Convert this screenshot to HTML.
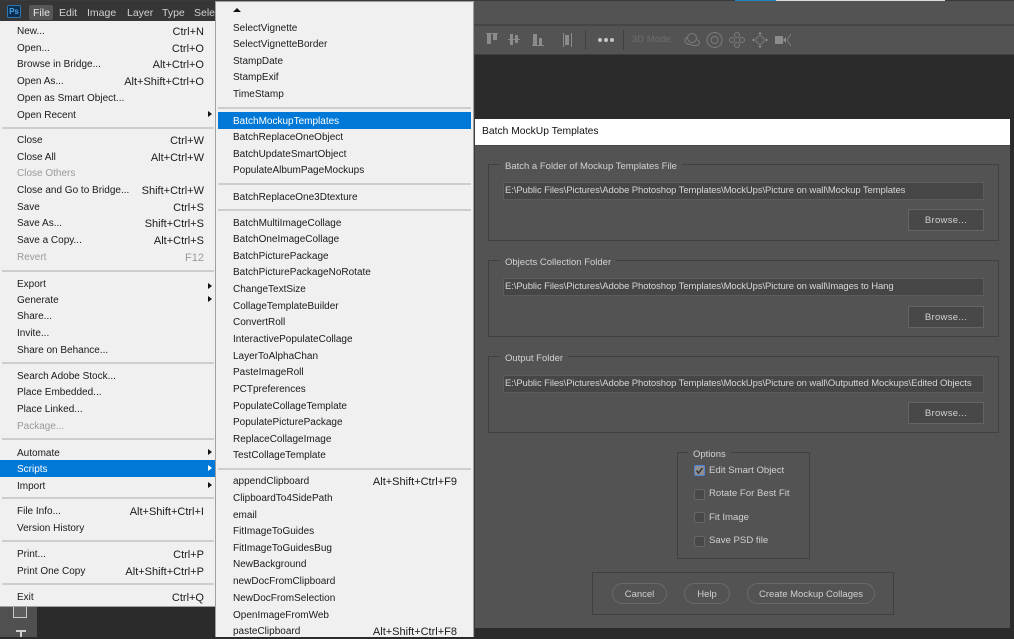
<!DOCTYPE html>
<html><head><meta charset="utf-8">
<style>
*{box-sizing:border-box}
html,body{margin:0;padding:0}
body{width:1014px;height:637px;position:relative;overflow:hidden;background:#2b2b2b;font-family:"Liberation Sans",sans-serif;font-size:10px}
.a{position:absolute}
.t{position:absolute;white-space:nowrap;line-height:14px;height:14px}
.m,.d,.w{margin-top:1px}
.w{color:#fff}
.m{color:#1a1a1a}
.d{color:#9a9a9a}
.sep{position:absolute;height:2px;background:#cdcdcd}
.r{text-align:right;font-size:11px}
.g{position:absolute;border:1px solid #404040}
.lg{position:absolute;background:#535353;color:#d2d2d2;padding:0 5px;line-height:12px;white-space:nowrap;font-size:9.500px;margin-top:1px}
.in{position:absolute;background:#464646;border:1px solid #5c5c5c;color:#d6d6d6;line-height:16px;padding-left:1px;white-space:nowrap;overflow:hidden;left:503px;width:481px;height:18px;font-size:9.500px;letter-spacing:-.1px}
.br{position:absolute;left:908px;width:76px;height:22px;background:#484848;border:1px solid #646464;color:#cfcfcf;text-align:center;line-height:21px;font-size:9.500px;letter-spacing:.3px}
.pb{position:absolute;top:583px;height:21px;border:1px solid #6a6a6a;border-radius:11px;color:#d0d0d0;text-align:center;line-height:22px;background:#535353;font-size:9.500px}
.cb{position:absolute;left:694px;width:11px;height:11px;background:#484848;border:1px solid #666;border-radius:2px}
.cl{position:absolute;left:709px;color:#d0d0d0;line-height:12px;white-space:nowrap;font-size:9.600px}
</style></head><body>
<!-- app bg -->
<div class="a" style="left:0;top:0;width:1014px;height:25px;background:#535353"></div>
<div class="a" style="left:0;top:0;width:216px;height:21px;background:#363636"></div>
<div class="a" style="left:0;top:0;width:1014px;height:1px;background:#3a3a3a"></div>
<div class="a" style="left:735px;top:0;width:41px;height:1px;background:#1f86c4"></div>
<div class="a" style="left:776px;top:0;width:169px;height:1px;background:#dcdcdc"></div>
<div class="a" style="left:0;top:24px;width:1014px;height:2px;background:#464646"></div>
<div class="a" style="left:0;top:26px;width:1014px;height:28px;background:#535353"></div>
<div class="a" style="left:0;top:54px;width:1014px;height:1px;background:#3e3e3e"></div>
<!-- toolbar icons -->
<svg class="a" style="left:470px;top:26px" width="340" height="29" viewBox="0 0 340 29">
<g fill="#8b8b8b">
<rect x="16" y="7" width="12" height="1"/><rect x="17" y="8" width="4" height="10"/><rect x="23" y="8" width="4" height="6"/>
<rect x="38" y="13" width="12" height="1"/><rect x="40" y="8" width="3" height="11"/><rect x="45" y="9" width="3" height="8"/>
<rect x="62" y="19" width="12" height="1"/><rect x="63" y="8" width="4" height="11"/><rect x="69" y="12" width="3" height="7"/>
<rect x="93" y="7" width="1" height="14"/><rect x="101" y="7" width="1" height="14"/><rect x="95" y="9" width="4" height="10"/>
<rect x="115" y="4" width="1" height="20" fill="#3f3f3f"/><rect x="153" y="4" width="1" height="20" fill="#3f3f3f"/>
<circle cx="130" cy="14" r="2" fill="#c4c4c4"/><circle cx="136" cy="14" r="2" fill="#c4c4c4"/><circle cx="142" cy="14" r="2" fill="#c4c4c4"/>
</g>
<g fill="none" stroke="#7c7c7c">
<circle cx="222" cy="12" r="4.500"/>
<path d="M218 11c-3 1-4 3-2 6 2 2 5 1 6 2 2 1 6 1 7-1 1-2 0-4-2-4"/>
<circle cx="244.500" cy="14" r="7.500"/><circle cx="244.500" cy="14" r="3.500"/>
<circle cx="267" cy="9" r="2.500"/><circle cx="267" cy="19" r="2.500"/><circle cx="262" cy="14" r="2.500"/><circle cx="272" cy="14" r="2.500"/>
<path d="M290 9l5 5-5 5-5-5z"/>
<path d="M321 8l-4 6 4 6"/>
</g>
<g fill="#8c8c8c">
<path d="M290 6l2 2h-4zM290 22l2-2h-4zM282 14l2-2v4zM298 14l-2-2v4z"/>
<rect x="305" y="10" width="8" height="8"/><path d="M313 14l3-3v6z"/>
</g>
</svg>
<div class="t" style="left:632px;top:33px;color:#6e6e6e;font-size:9.500px">3D Mode:</div>
<!-- lower-left tool panel -->
<div class="a" style="left:0;top:607px;width:37px;height:30px;background:#505050"></div>
<div class="a" style="left:13px;top:607px;width:14px;height:11px;border:1px solid #c8c8c8;border-top:0;background:#5e5e5e"></div>
<div class="a" style="left:16px;top:630px;width:10px;height:2px;background:#d0d0d0"></div>
<div class="a" style="left:20px;top:630px;width:2px;height:7px;background:#d0d0d0"></div>
<!-- menu bar -->
<div class="a" style="left:7px;top:5px;width:14px;height:13px;background:#0d2f4f;border:1px solid #2f76ad;border-radius:2px;color:#46a6ea;font-size:8px;font-weight:bold;line-height:11px;text-align:center">Ps</div>
<div class="a" style="left:29px;top:5px;width:24px;height:15px;background:#565656;border-radius:2px"></div>
<div class="t" style="left:33px;top:6px;color:#e6e6e6;font-size:10.500px">File</div>
<div class="t" style="left:59px;top:6px;color:#d2d2d2;font-size:10.500px">Edit</div>
<div class="t" style="left:87px;top:6px;color:#d2d2d2;font-size:10.500px">Image</div>
<div class="t" style="left:127px;top:6px;color:#d2d2d2;font-size:10.500px">Layer</div>
<div class="t" style="left:162px;top:6px;color:#d2d2d2;font-size:10.500px">Type</div>
<div class="t" style="left:194px;top:6px;color:#d2d2d2;font-size:10.500px">Selec</div>
<!-- dialog -->
<div class="a" style="left:473px;top:55px;width:2px;height:582px;background:#3a3a3a"></div>
<div class="a" style="left:475px;top:119px;width:535px;height:509px;background:#535353"></div>
<div class="a" style="left:475px;top:145px;width:535px;height:1px;background:#484848"></div>
<div class="a" style="left:475px;top:119px;width:535px;height:26px;background:#fff"></div>
<div class="t" style="left:482px;top:125px;color:#111;font-size:10.300px">Batch MockUp Templates</div>

<div class="g" style="left:488px;top:164px;width:511px;height:77px"></div>
<div class="lg" style="left:500px;top:160px">Batch a Folder of Mockup Templates File</div>
<div class="in" style="top:182px">E:\Public Files\Pictures\Adobe Photoshop Templates\MockUps\Picture on wall\Mockup Templates</div>
<div class="br" style="top:209px">Browse...</div>

<div class="g" style="left:488px;top:260px;width:511px;height:77px"></div>
<div class="lg" style="left:500px;top:256px">Objects Collection Folder</div>
<div class="in" style="top:278px">E:\Public Files\Pictures\Adobe Photoshop Templates\MockUps\Picture on wall\Images to Hang</div>
<div class="br" style="top:306px">Browse...</div>

<div class="g" style="left:488px;top:356px;width:511px;height:77px"></div>
<div class="lg" style="left:500px;top:352px">Output Folder</div>
<div class="in" style="top:375px">E:\Public Files\Pictures\Adobe Photoshop Templates\MockUps\Picture on wall\Outputted Mockups\Edited Objects</div>
<div class="br" style="top:402px">Browse...</div>

<div class="g" style="left:677px;top:452px;width:133px;height:107px"></div>
<div class="lg" style="left:688px;top:448px">Options</div>
<div class="cb" style="top:465px;background:#8f8f8f;border:1px solid #4f83d8"></div>
<svg class="a" style="left:694px;top:465px" width="11" height="11"><path d="M2.500 5.500l2 2.500 4-5" fill="none" stroke="#333" stroke-width="1.500"/></svg>
<div class="cl" style="top:465px">Edit Smart Object</div>
<div class="cb" style="top:489px"></div><div class="cl" style="top:488px">Rotate For Best Fit</div>
<div class="cb" style="top:512px"></div><div class="cl" style="top:512px">Fit Image</div>
<div class="cb" style="top:536px"></div><div class="cl" style="top:535px">Save PSD file</div>

<div class="g" style="left:592px;top:572px;width:302px;height:43px"></div>
<div class="pb" style="left:612px;width:55px">Cancel</div>
<div class="pb" style="left:684px;width:46px">Help</div>
<div class="pb" style="left:747px;width:128px">Create Mockup Collages</div>

<!-- file menu -->
<div class="a" style="left:0;top:21px;width:216px;height:586px;background:#f0f0f0;border-bottom:1px solid #a0a0a0"></div>
<div class="a" style="left:0;top:460px;width:215px;height:17px;background:#0078d7"></div>
<div class="sep" style="left:2px;top:127px;width:212px"></div>
<div class="sep" style="left:2px;top:270px;width:212px"></div>
<div class="sep" style="left:2px;top:362px;width:212px"></div>
<div class="sep" style="left:2px;top:438px;width:212px"></div>
<div class="sep" style="left:2px;top:497px;width:212px"></div>
<div class="sep" style="left:2px;top:540px;width:212px"></div>
<div class="sep" style="left:2px;top:583px;width:212px"></div>

<div class="t m" style="left:17px;top:24px">New...</div>
<div class="t m" style="left:17px;top:41px">Open...</div>
<div class="t m" style="left:17px;top:57px">Browse in Bridge...</div>
<div class="t m" style="left:17px;top:74px">Open As...</div>
<div class="t m" style="left:17px;top:91px">Open as Smart Object...</div>
<div class="t m" style="left:17px;top:108px">Open Recent</div>
<div class="t m" style="left:17px;top:133px">Close</div>
<div class="t m" style="left:17px;top:150px">Close All</div>
<div class="t d" style="left:17px;top:166px">Close Others</div>
<div class="t m" style="left:17px;top:183px">Close and Go to Bridge...</div>
<div class="t m" style="left:17px;top:200px">Save</div>
<div class="t m" style="left:17px;top:216px">Save As...</div>
<div class="t m" style="left:17px;top:233px">Save a Copy...</div>
<div class="t d" style="left:17px;top:250px">Revert</div>
<div class="t m" style="left:17px;top:277px">Export</div>
<div class="t m" style="left:17px;top:293px">Generate</div>
<div class="t m" style="left:17px;top:309px">Share...</div>
<div class="t m" style="left:17px;top:326px">Invite...</div>
<div class="t m" style="left:17px;top:343px">Share on Behance...</div>
<div class="t m" style="left:17px;top:369px">Search Adobe Stock...</div>
<div class="t m" style="left:17px;top:385px">Place Embedded...</div>
<div class="t m" style="left:17px;top:402px">Place Linked...</div>
<div class="t d" style="left:17px;top:419px">Package...</div>
<div class="t m" style="left:17px;top:446px">Automate</div>
<div class="t w" style="left:17px;top:462px">Scripts</div>
<div class="t m" style="left:17px;top:479px">Import</div>
<div class="t m" style="left:17px;top:504px">File Info...</div>
<div class="t m" style="left:17px;top:521px">Version History</div>
<div class="t m" style="left:17px;top:547px">Print...</div>
<div class="t m" style="left:17px;top:564px">Print One Copy</div>
<div class="t m" style="left:17px;top:590px">Exit</div>

<div class="t m r" style="right:810px;top:24px">Ctrl+N</div>
<div class="t m r" style="right:810px;top:41px">Ctrl+O</div>
<div class="t m r" style="right:810px;top:57px">Alt+Ctrl+O</div>
<div class="t m r" style="right:810px;top:74px">Alt+Shift+Ctrl+O</div>
<div class="t m r" style="right:810px;top:133px">Ctrl+W</div>
<div class="t m r" style="right:810px;top:150px">Alt+Ctrl+W</div>
<div class="t m r" style="right:810px;top:183px">Shift+Ctrl+W</div>
<div class="t m r" style="right:810px;top:200px">Ctrl+S</div>
<div class="t m r" style="right:810px;top:216px">Shift+Ctrl+S</div>
<div class="t m r" style="right:810px;top:233px">Alt+Ctrl+S</div>
<div class="t d r" style="right:810px;top:250px">F12</div>
<div class="t m r" style="right:810px;top:504px">Alt+Shift+Ctrl+I</div>
<div class="t m r" style="right:810px;top:547px">Ctrl+P</div>
<div class="t m r" style="right:810px;top:564px">Alt+Shift+Ctrl+P</div>
<div class="t m r" style="right:810px;top:590px">Ctrl+Q</div>
<svg class="a" style="left:207px;top:108px" width="6" height="390">
<g fill="#111"><path d="M1 3l4 3-4 3z"/><path d="M1 175l4 3-4 3z"/><path d="M1 188l4 3-4 3z"/><path d="M1 341l4 3-4 3z"/><path d="M1 374l4 3-4 3z"/></g>
<path d="M1 357l4 3-4 3z" fill="#fff"/>
</svg>

<!-- scripts menu -->
<div class="a" style="left:215px;top:1px;width:259px;height:636px;background:#f0f0f0;border:1px solid #a0a0a0;border-bottom:0"></div>
<svg class="a" style="left:233px;top:7px" width="10" height="6"><path d="M0 5L4 1l4 4z" fill="#111"/></svg>
<div class="a" style="left:218px;top:112px;width:253px;height:17px;background:#0078d7"></div>
<div class="sep" style="left:218px;top:107px;width:253px"></div>
<div class="sep" style="left:218px;top:183px;width:253px"></div>
<div class="sep" style="left:218px;top:209px;width:253px"></div>
<div class="sep" style="left:218px;top:468px;width:253px"></div>

<div class="t m" style="left:233px;top:21px">SelectVignette</div>
<div class="t m" style="left:233px;top:37px">SelectVignetteBorder</div>
<div class="t m" style="left:233px;top:54px">StampDate</div>
<div class="t m" style="left:233px;top:70px">StampExif</div>
<div class="t m" style="left:233px;top:87px">TimeStamp</div>
<div class="t w" style="left:233px;top:114px">BatchMockupTemplates</div>
<div class="t m" style="left:233px;top:130px">BatchReplaceOneObject</div>
<div class="t m" style="left:233px;top:147px">BatchUpdateSmartObject</div>
<div class="t m" style="left:233px;top:163px">PopulateAlbumPageMockups</div>
<div class="t m" style="left:233px;top:190px">BatchReplaceOne3Dtexture</div>
<div class="t m" style="left:233px;top:216px">BatchMultiImageCollage</div>
<div class="t m" style="left:233px;top:232px">BatchOneImageCollage</div>
<div class="t m" style="left:233px;top:249px">BatchPicturePackage</div>
<div class="t m" style="left:233px;top:265px">BatchPicturePackageNoRotate</div>
<div class="t m" style="left:233px;top:282px">ChangeTextSize</div>
<div class="t m" style="left:233px;top:299px">CollageTemplateBuilder</div>
<div class="t m" style="left:233px;top:315px">ConvertRoll</div>
<div class="t m" style="left:233px;top:332px">InteractivePopulateCollage</div>
<div class="t m" style="left:233px;top:349px">LayerToAlphaChan</div>
<div class="t m" style="left:233px;top:365px">PasteImageRoll</div>
<div class="t m" style="left:233px;top:382px">PCTpreferences</div>
<div class="t m" style="left:233px;top:399px">PopulateCollageTemplate</div>
<div class="t m" style="left:233px;top:415px">PopulatePicturePackage</div>
<div class="t m" style="left:233px;top:432px">ReplaceCollageImage</div>
<div class="t m" style="left:233px;top:448px">TestCollageTemplate</div>
<div class="t m" style="left:233px;top:474px">appendClipboard</div>
<div class="t m" style="left:233px;top:491px">ClipboardTo4SidePath</div>
<div class="t m" style="left:233px;top:508px">email</div>
<div class="t m" style="left:233px;top:524px">FitImageToGuides</div>
<div class="t m" style="left:233px;top:541px">FitImageToGuidesBug</div>
<div class="t m" style="left:233px;top:557px">NewBackground</div>
<div class="t m" style="left:233px;top:574px">newDocFromClipboard</div>
<div class="t m" style="left:233px;top:591px">NewDocFromSelection</div>
<div class="t m" style="left:233px;top:608px">OpenImageFromWeb</div>
<div class="t m" style="left:233px;top:624px">pasteClipboard</div>
<div class="t m r" style="right:557px;top:474px">Alt+Shift+Ctrl+F9</div>
<div class="t m r" style="right:557px;top:624px">Alt+Shift+Ctrl+F8</div>
</body></html>
